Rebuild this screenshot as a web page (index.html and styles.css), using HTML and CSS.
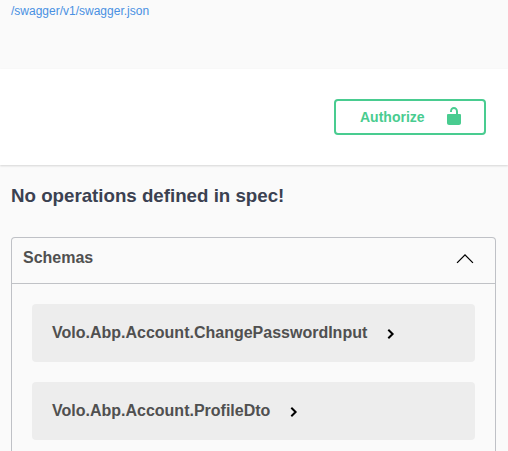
FILE: index.html
```html
<!DOCTYPE html>
<html lang="en">
<head>
<meta charset="utf-8">
<title>Swagger UI</title>
<link rel="stylesheet" href="styles.css">
</head>
<body>
<div class="info">
  <a class="spec-link" href="#">/swagger/v1/swagger.json</a>
</div>
<div class="scheme-container">
  <button class="authorize" type="button">
    <span class="authorize-label">Authorize</span>
    <svg class="lock" width="20" height="20" viewBox="0 0 20 20" aria-hidden="true"><path d="M15.8 8H14V5.6C14 2.7 12.1 1 9.9 1 7.7 1 6 2.7 6 5.6V6h2v-.801C8 3.754 8.797 3 9.9 3 11 3 12 3.754 12 5.199V8H4.2C3.5 8 3 8.5 3 9.1V17c0 1.100 1 2 2 2h10c1 0 2-.9 2-2V9.100C17 8.500 16.500 8 15.800 8z"/></svg>
  </button>
</div>
<h3 class="no-ops">No operations defined in spec!</h3>
<section class="models">
  <header class="models-head">
    <h4 class="models-title">Schemas</h4>
    <svg class="collapse" width="20" height="20" viewBox="0 0 20 20" aria-hidden="true"><path d="M17.500 15.300 10 7.800l-7.500 7.500-.9-.9L10 6l8.400 8.400z"/></svg>
  </header>
  <div class="models-body">
    <div class="model-box">
      <span class="model-name">Volo.Abp.Account.ChangePasswordInput</span>
      <svg class="expand" width="10" height="10" viewBox="0 0 10 10" aria-hidden="true"><path d="M2.300 0.800 6.600 5 2.300 9.200" /></svg>
    </div>
    <div class="model-box">
      <span class="model-name">Volo.Abp.Account.ProfileDto</span>
      <svg class="expand" width="10" height="10" viewBox="0 0 10 10" aria-hidden="true"><path d="M2.300 0.800 6.600 5 2.300 9.200" /></svg>
    </div>
  </div>
</section>
</body>
</html>
```
FILE: styles.css
```css
html, body {
  margin: 0;
  padding: 0;
  height: 451px;
  overflow: hidden;
  background: #fafafa;
  font-family: "Liberation Sans", Arial, sans-serif;
  color: #3b4151;
}
.info {
  height: 69px;
  padding: 4px 11px 0;
  box-sizing: border-box;
}
.spec-link {
  display: block;
  font-size: 12px;
  line-height: 14px;
  color: #4990e2;
  text-decoration: none;
}
.scheme-container {
  height: 96px;
  background: #fff;
  box-shadow: 0 1px 2px 0 rgba(0, 0, 0, 0.15);
  display: flex;
  justify-content: flex-end;
  align-items: center;
  padding: 0 22px;
  position: relative;
}
.authorize {
  width: 152px;
  height: 36px;
  box-sizing: border-box;
  border: 2px solid #49cc90;
  border-radius: 4px;
  background: transparent;
  color: #49cc90;
  font-family: inherit;
  font-size: 14px;
  font-weight: 700;
  padding: 0 0 0 24px;
  display: flex;
  align-items: center;
}
.authorize-label {
  width: 84px;
  text-align: left;
}
.lock {
  fill: #49cc90;
  margin-top: -2px;
}
.no-ops {
  margin: 0;
  padding: 19px 11px 0;
  font-size: 18.72px;
  line-height: 23px;
  font-weight: 700;
  height: 72px;
  box-sizing: border-box;
}
.models {
  margin: 0 12px 0 11px;
  border: 1px solid rgba(59, 65, 81, 0.3);
  border-bottom: 0;
  border-radius: 4px 4px 0 0;
}
.models-head {
  height: 45px;
  display: flex;
  align-items: center;
  justify-content: space-between;
  padding: 0 20px 0 11px;
  border-bottom: 1px solid rgba(59, 65, 81, 0.3);
}
.models-title {
  margin: 0;
  font-size: 16px;
  font-weight: 700;
  color: #505050;
  margin-bottom: 6px;
}
.collapse {
  fill: #000;
  margin-bottom: 5px;
}
.models-body {
  padding: 20px 20px 11px;
  display: flex;
  flex-direction: column;
  gap: 20px;
}
.model-box {
  height: 58px;
  background: rgba(0, 0, 0, 0.05);
  border-radius: 4px;
  padding: 0 20px;
  display: flex;
  align-items: center;
}
.model-name {
  font-size: 16px;
  font-weight: 700;
  color: #505050;
}
.expand {
  fill: none;
  stroke: #000;
  stroke-width: 2;
  margin-left: 18.5px;
  margin-top: 2px;
}
```
